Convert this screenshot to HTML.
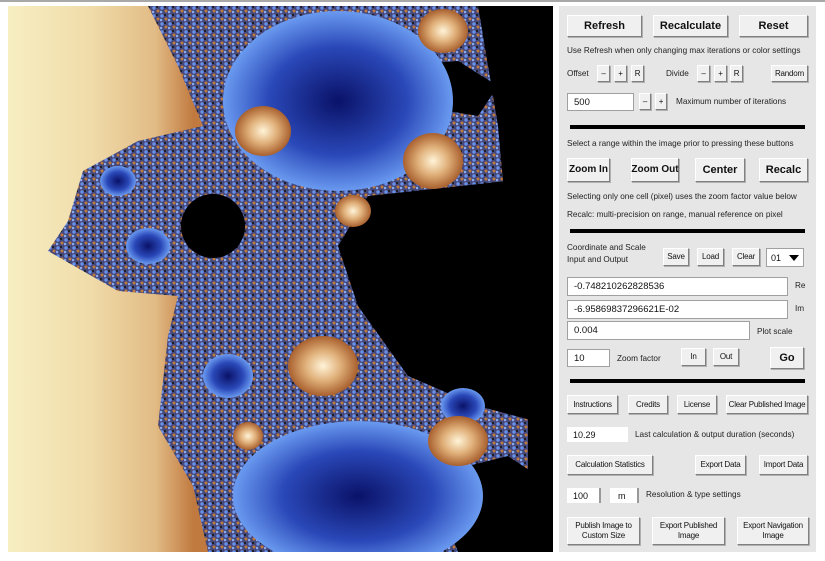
<!DOCTYPE html>
<html><head><meta charset="utf-8"><style>
body{margin:0;width:825px;height:561px;background:#fff;position:relative;overflow:hidden;font-family:"Liberation Sans",Arial,sans-serif;}
#top{position:absolute;left:0;top:0;width:825px;height:2px;background:#a8a8a8}
#img{position:absolute;left:8px;top:6px;width:545px;height:546px}
#panel{position:absolute;left:559px;top:6px;width:257px;height:546px;background:#e6e6e6}
.b{position:absolute;background:#f0f0f0;border:1px solid #fff;border-right:1px solid #808080;border-bottom:1px solid #808080;box-shadow:1px 1px 0 #b0b0b0;box-sizing:border-box;display:flex;align-items:center;justify-content:center;text-align:center;color:#111;font-size:8px;line-height:10px;white-space:nowrap;letter-spacing:-0.2px}
.B{font-weight:bold;font-size:11px;letter-spacing:0}
.t{position:absolute;font-size:8.2px;color:#222;white-space:nowrap}
.i{position:absolute;background:#fff;border:1px solid #a0a0a0;box-sizing:border-box;font-size:9.5px;padding-left:6px;display:flex;align-items:center;color:#111}
.bar{position:absolute;left:570px;width:235px;height:4px;background:#000}
</style></head><body>
<div id="top"></div>
<svg id="img" viewBox="0 0 545 546" xmlns="http://www.w3.org/2000/svg">
<defs>
<linearGradient id="bg" x1="0" x2="1" y1="0" y2="0"><stop offset="0" stop-color="#f7eec2"/><stop offset="0.15" stop-color="#f0dcaa"/><stop offset="0.27" stop-color="#e2bb85"/><stop offset="0.34" stop-color="#c07a40"/></linearGradient>
<radialGradient id="bl"><stop offset="0" stop-color="#0a1268"/><stop offset="0.6" stop-color="#2a48b8"/><stop offset="1" stop-color="#6a9af0"/></radialGradient>
<radialGradient id="tn"><stop offset="0" stop-color="#fff4d8"/><stop offset="0.5" stop-color="#e0b07a"/><stop offset="1" stop-color="#a8602e"/></radialGradient>
<pattern id="sp" width="8" height="8" patternUnits="userSpaceOnUse"><rect width="8" height="8" fill="#44487a"/><circle cx="2" cy="2" r="1.7" fill="#6a90e8"/><circle cx="6" cy="5" r="1.5" fill="#c07a40"/><circle cx="5" cy="1" r="1" fill="#111"/><circle cx="1" cy="6" r="1.3" fill="#8aaaf0"/></pattern>
</defs>
<rect width="545" height="546" fill="url(#bg)"/>
<path d="M140 0 L545 0 L545 546 L200 546 L185 480 L150 420 L160 330 L170 290 L110 285 L40 245 L60 215 L75 165 L130 135 L195 120 L170 60 Z" fill="url(#sp)"/>
<path d="M470 0 L545 0 L545 546 L520 546 L520 240 L500 230 L490 120 Z" fill="#000"/>
<path d="M360 190 L545 170 L545 420 L470 400 L400 370 L350 300 L330 240 Z" fill="#000"/>
<path d="M390 60 L450 55 L490 80 L470 110 L410 100 Z" fill="#000"/>
<path d="M420 470 L500 450 L545 480 L545 546 L450 546 Z" fill="#000"/>
<ellipse cx="330" cy="95" rx="115" ry="90" fill="url(#bl)"/>
<ellipse cx="350" cy="490" rx="125" ry="75" fill="url(#bl)"/>
<ellipse cx="140" cy="240" rx="22" ry="18" fill="url(#bl)"/>
<ellipse cx="110" cy="175" rx="18" ry="15" fill="url(#bl)"/>
<ellipse cx="220" cy="370" rx="25" ry="22" fill="url(#bl)"/>
<ellipse cx="455" cy="400" rx="22" ry="18" fill="url(#bl)"/>
<ellipse cx="255" cy="125" rx="28" ry="25" fill="url(#tn)"/>
<ellipse cx="425" cy="155" rx="30" ry="28" fill="url(#tn)"/>
<ellipse cx="435" cy="25" rx="25" ry="22" fill="url(#tn)"/>
<ellipse cx="315" cy="360" rx="35" ry="30" fill="url(#tn)"/>
<ellipse cx="450" cy="435" rx="30" ry="25" fill="url(#tn)"/>
<ellipse cx="345" cy="205" rx="18" ry="16" fill="url(#tn)"/>
<ellipse cx="240" cy="430" rx="15" ry="14" fill="url(#tn)"/>
<ellipse cx="205" cy="220" rx="32" ry="32" fill="#000"/>
</svg>
<div id="panel"></div>
<div class="b B" style="left:567px;top:15px;width:75px;height:22px">Refresh</div>
<div class="b B" style="left:653px;top:15px;width:75px;height:22px">Recalculate</div>
<div class="b B" style="left:739px;top:15px;width:69px;height:22px">Reset</div>
<div class="t" style="left:567px;top:46px">Use Refresh when only changing max iterations or color settings</div>
<div class="t" style="left:567px;top:69px">Offset</div>
<div class="b" style="left:597px;top:65px;width:13px;height:17px">–</div>
<div class="b" style="left:614px;top:65px;width:13px;height:17px">+</div>
<div class="b" style="left:631px;top:65px;width:13px;height:17px">R</div>
<div class="t" style="left:666px;top:69px">Divide</div>
<div class="b" style="left:697px;top:65px;width:13px;height:17px">–</div>
<div class="b" style="left:714px;top:65px;width:13px;height:17px">+</div>
<div class="b" style="left:730px;top:65px;width:13px;height:17px">R</div>
<div class="b" style="left:771px;top:65px;width:37px;height:17px">Random</div>
<div class="i" style="left:567px;top:93px;width:67px;height:18px">500</div>
<div class="b" style="left:639px;top:93px;width:12px;height:17px">–</div>
<div class="b" style="left:655px;top:93px;width:12px;height:17px">+</div>
<div class="t" style="left:676px;top:97px">Maximum number of iterations</div>
<div class="bar" style="top:125px"></div>
<div class="t" style="left:567px;top:139px">Select a range within the image prior to pressing these buttons</div>
<div class="b B" style="left:567px;top:158px;width:43px;height:24px;font-size:10px">Zoom In</div>
<div class="b B" style="left:631px;top:158px;width:48px;height:24px;font-size:10px">Zoom Out</div>
<div class="b B" style="left:695px;top:158px;width:50px;height:24px">Center</div>
<div class="b B" style="left:759px;top:158px;width:49px;height:24px">Recalc</div>
<div class="t" style="left:567px;top:192px">Selecting only one cell (pixel) uses the zoom factor value below</div>
<div class="t" style="left:567px;top:210px">Recalc: multi-precision on range, manual reference on pixel</div>
<div class="bar" style="top:229px"></div>
<div class="t" style="left:567px;top:242px;line-height:12px">Coordinate and Scale<br>Input and Output</div>
<div class="b" style="left:663px;top:248px;width:26px;height:18px">Save</div>
<div class="b" style="left:697px;top:248px;width:27px;height:18px">Load</div>
<div class="b" style="left:732px;top:248px;width:28px;height:18px">Clear</div>
<div class="i" style="left:766px;top:248px;width:38px;height:19px;font-size:9px;padding-left:4px">01<span style="position:absolute;right:4px;top:6px;width:0;height:0;border-left:5px solid transparent;border-right:5px solid transparent;border-top:6px solid #000"></span></div>
<div class="i" style="left:567px;top:277px;width:221px;height:19px">-0.748210262828536</div>
<div class="t" style="left:795px;top:281px">Re</div>
<div class="i" style="left:567px;top:300px;width:221px;height:19px">-6.95869837296621E-02</div>
<div class="t" style="left:795px;top:304px">Im</div>
<div class="i" style="left:567px;top:321px;width:183px;height:19px">0.004</div>
<div class="t" style="left:757px;top:327px">Plot scale</div>
<div class="i" style="left:567px;top:349px;width:43px;height:18px">10</div>
<div class="t" style="left:617px;top:354px">Zoom factor</div>
<div class="b" style="left:681px;top:348px;width:25px;height:18px">In</div>
<div class="b" style="left:713px;top:348px;width:26px;height:18px">Out</div>
<div class="b B" style="left:770px;top:347px;width:34px;height:22px">Go</div>
<div class="bar" style="top:379px"></div>
<div class="b" style="left:567px;top:395px;width:51px;height:19px">Instructions</div>
<div class="b" style="left:628px;top:395px;width:40px;height:19px">Credits</div>
<div class="b" style="left:677px;top:395px;width:40px;height:19px">License</div>
<div class="b" style="left:726px;top:395px;width:82px;height:19px">Clear Published Image</div>
<div class="i" style="left:567px;top:427px;width:61px;height:15px;border:none;font-size:9px">10.29</div>
<div class="t" style="left:635px;top:430px">Last calculation &amp; output duration (seconds)</div>
<div class="b" style="left:567px;top:455px;width:86px;height:20px">Calculation Statistics</div>
<div class="b" style="left:695px;top:455px;width:51px;height:20px">Export Data</div>
<div class="b" style="left:759px;top:455px;width:49px;height:20px">Import Data</div>
<div class="i" style="left:567px;top:488px;width:34px;height:15px;border:none;border-right:2px solid #999;font-size:9px">100</div>
<div class="i" style="left:610px;top:488px;width:29px;height:15px;border:none;border-right:2px solid #999;font-size:9px;padding-left:8px">m</div>
<div class="t" style="left:646px;top:490px">Resolution &amp; type settings</div>
<div class="b" style="left:567px;top:517px;width:73px;height:28px">Publish Image to<br>Custom Size</div>
<div class="b" style="left:652px;top:517px;width:73px;height:28px">Export Published<br>Image</div>
<div class="b" style="left:737px;top:517px;width:72px;height:28px">Export Navigation<br>Image</div>
</body></html>
